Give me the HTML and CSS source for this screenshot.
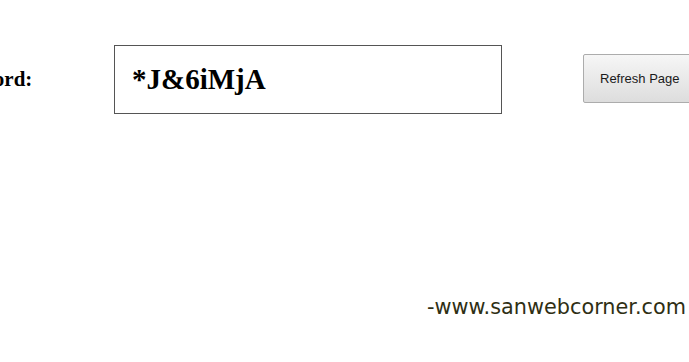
FILE: index.html
```
<!DOCTYPE html>
<html>
<head>
<meta charset="utf-8">
<link rel="stylesheet" href="styles.css">
</head>
<body>
<div class="row">
  <label class="label">Password:</label>
  <div class="box">*J&amp;6iMjA</div>
  <button class="btn">Refresh Page</button>
</div>
<div class="credit">-www.sanwebcorner.com</div>
</body>
</html>
```
FILE: styles.css
```
html, body {
  margin: 0;
  padding: 0;
  background: #ffffff;
  overflow: hidden;
  width: 689px;
  height: 362px;
}
.row {
  display: flex;
  align-items: flex-start;
  margin-top: 45px;
  margin-left: -61px;
  white-space: nowrap;
}
.label {
  flex: none;
  width: 175px;
  font-family: "Liberation Serif", "Times New Roman", serif;
  font-weight: bold;
  font-size: 21px;
  line-height: 24px;
  color: #000;
  margin-top: 22px;
}
.box {
  flex: none;
  box-sizing: border-box;
  width: 388px;
  height: 69px;
  border: 1px solid #555555;
  padding-left: 17px;
  display: flex;
  align-items: center;
  font-family: "Liberation Serif", "Times New Roman", serif;
  font-weight: bold;
  font-size: 29px;
  line-height: 33px;
  color: #000;
}
.btn {
  flex: none;
  box-sizing: border-box;
  margin-left: 81px;
  margin-top: 9px;
  height: 49px;
  padding: 0 16px;
  border: 1px solid #acacac;
  border-radius: 2px;
  background: linear-gradient(#f6f6f6, #dddddd);
  font-family: "Liberation Sans", Arial, sans-serif;
  font-size: 13px;
  color: #1a1a1a;
}
.credit {
  margin-top: 181px;
  margin-left: 427px;
  white-space: nowrap;
  font-family: "DejaVu Sans", Verdana, sans-serif;
  font-size: 20.8px;
  line-height: 24px;
  color: #2f2f14;
}
```
